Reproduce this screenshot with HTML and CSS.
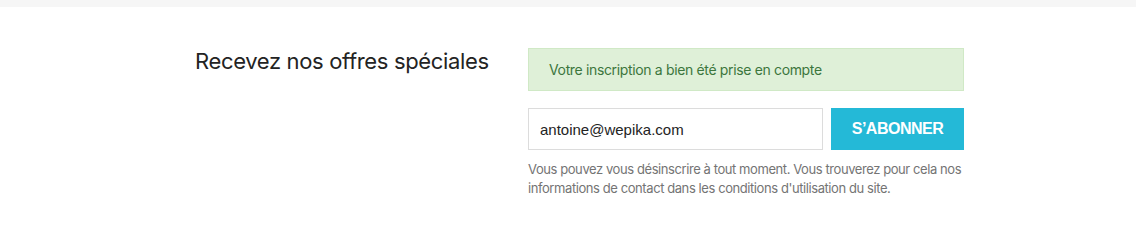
FILE: index.html
```html
<!DOCTYPE html>
<html>
<head>
<meta charset="utf-8">
<link rel="stylesheet" href="styles.css">
</head>
<body>
<div class="topbar"></div>
<div class="newsletter">
  <div class="newsletter-title">
    <h2>Recevez nos offres spéciales</h2>
  </div>
  <div class="newsletter-form">
    <div class="alert-success">Votre inscription a bien été prise en compte</div>
    <form action="" class="subscribe">
      <input type="email" class="email-input" value="antoine@wepika.com">
      <button type="submit" class="btn-subscribe">S’abonner</button>
    </form>
    <p class="legal">Vous pouvez vous désinscrire à tout moment. Vous trouverez pour cela nos informations de contact dans les conditions d'utilisation du site.</p>
  </div>
</div>
</body>
</html>
```
FILE: styles.css
```css
body {
    margin: 0;
    font-family: Inter, "Noto Sans", sans-serif;
    background-color: #fff;
}
.topbar {
    height: 7px;
    background-color: #f6f6f6;
}
.newsletter {
    display: flex;
    margin-left: 195px;
    padding-top: 41px;
}
.newsletter-title {
    width: 333px;
}
.newsletter-title h2 {
    margin: 0;
    font-size: 22px;
    font-weight: 400;
    line-height: 26px;
    letter-spacing: -0.35px;
    color: #232323;
}
.newsletter-form {
    width: 436px;
}
.alert-success {
    height: 41px;
    box-sizing: content-box;
    padding: 0 20px;
    display: flex;
    align-items: center;
    background-color: #dff0d8;
    border: 1px solid #d0e9c6;
    color: #3c763d;
    font-size: 14px;
    letter-spacing: -0.35px;
}
.subscribe {
    display: flex;
    gap: 8px;
    margin-top: 17px;
}
.email-input {
    width: 295px;
    height: 42px;
    box-sizing: border-box;
    padding: 0 11px;
    border: 1px solid #dcdcdc;
    font-family: Arial, "Liberation Sans", sans-serif;
    font-size: 15px;
    color: #232323;
}
.btn-subscribe {
    width: 133px;
    height: 42px;
    border: none;
    background-color: #24b9d7;
    color: #fff;
    font-family: Arial, "Liberation Sans", sans-serif;
    font-weight: 700;
    font-size: 16px;
    letter-spacing: -0.5px;
    text-transform: uppercase;
    cursor: pointer;
}
.legal {
    margin: 10px 0 0;
    font-size: 13px;
    line-height: 19px;
    letter-spacing: -0.42px;
    color: #747474;
}
```
